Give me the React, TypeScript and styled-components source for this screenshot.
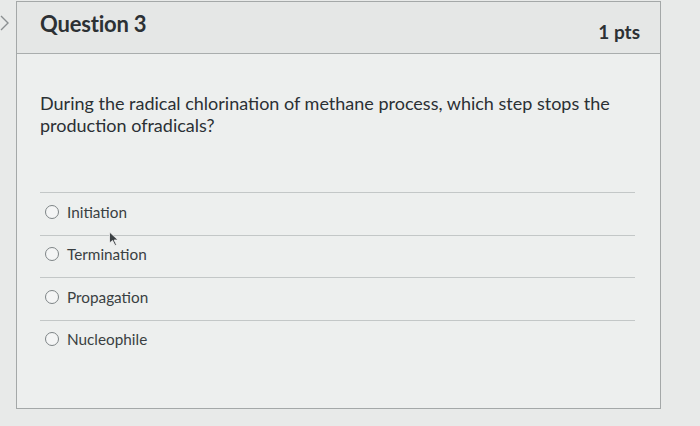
import React from "react";
import styled, { createGlobalStyle } from "styled-components";

const Global = createGlobalStyle`
  html, body { margin: 0; padding: 0; background: #e8eae9; }
  body { font-family: Lato, "Open Sans", sans-serif; color: #2d3b45; }
`;

const Page = styled.div`
  width: 700px;
  height: 426px;
  display: flex;
  align-items: flex-start;
  background: #e8eae9;
  overflow: hidden;
`;

const Gutter = styled.div`
  width: 16px;
  flex: 0 0 16px;
  padding-top: 14px;
  display: flex;
  justify-content: flex-start;
`;

const Card = styled.div`
  width: 645px;
  height: 408px;
  margin-top: 1px;
  border: 1px solid #a4a8a8;
  background: #edefee;
  position: relative;
  box-sizing: border-box;
`;

const Header = styled.div`
  height: 52px;
  box-sizing: border-box;
  background: #e5e7e6;
  border-bottom: 1px solid #a9adad;
  display: flex;
  justify-content: space-between;
  align-items: center;
  padding: 0 20px 0 23px;
`;

const Title = styled.h2`
  margin: 0 0 8px;
  font-size: 22px;
  font-weight: 700;
  color: #2c3134;
  letter-spacing: -0.2px;
`;

const Points = styled.span`
  margin-top: 8px;
  font-size: 19px;
  font-weight: 700;
  color: #2c3134;
`;

const Body = styled.div`
  padding: 38px 25px 0 23px;
`;

const Prompt = styled.p`
  margin: 0;
  font-size: 18px;
  line-height: 22px;
  color: #2b3034;
`;

const Answers = styled.ul`
  list-style: none;
  margin: 56px 0 0;
  padding: 0;
`;

const Answer = styled.li`
  height: 42.5px;
  border-top: 1px solid #c3c7c7;
  display: flex;
  align-items: center;
  gap: 8px;
  padding-left: 5px;
  padding-bottom: 4px;
  box-sizing: border-box;
  font-size: 15.3px;
  color: #3a3f42;
`;

const Radio = styled.span`
  width: 14px;
  height: 14px;
  border-radius: 50%;
  border: 1.5px solid #7e8486;
  background: #f4f5f5;
  box-sizing: border-box;
  flex: 0 0 auto;
`;

const Cursor = styled.svg`
  position: absolute;
  left: 91px;
  top: 229px;
`;

const options = ["Initiation", "Termination", "Propagation", "Nucleophile"];

export default function App() {
  return (
    <Page>
      <Global />
      <Gutter>
        <svg width="10" height="18" viewBox="0 0 10 18">
          <path d="M1 2 L8 9 L1 16" fill="none" stroke="#8a8f91" strokeWidth="1.4" />
        </svg>
      </Gutter>
      <Card>
        <Header>
          <Title>Question 3</Title>
          <Points>1 pts</Points>
        </Header>
        <Body>
          <Prompt>
            During the radical chlorination of methane process, which step stops the
            <br />
            production ofradicals?
          </Prompt>
          <Answers>
            {options.map((o) => (
              <Answer key={o}>
                <Radio />
                {o}
              </Answer>
            ))}
          </Answers>
        </Body>
        <Cursor width="13" height="16" viewBox="0 0 12 16">
          <path d="M1 1 L1 12 L4 9.5 L6.5 14.5 L8 13.8 L5.6 9 L9.5 9 Z" fill="#3c4144" stroke="#f2f2f2" strokeWidth="0.8" />
        </Cursor>
      </Card>
    </Page>
  );
}
